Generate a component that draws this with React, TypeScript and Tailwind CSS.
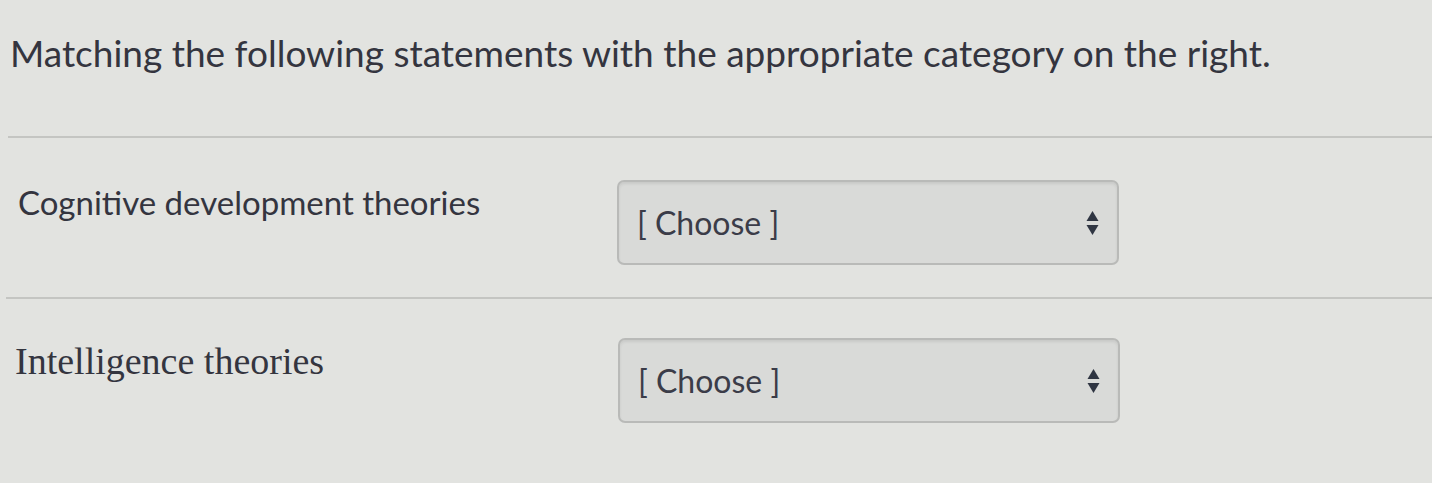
import React from 'react';

const Arrows = () => (
  <svg width="13" height="26" viewBox="0 0 13 26" className="shrink-0">
    <path d="M6.5 1 L12.5 11 L0.5 11 Z" fill="#2f3542" />
    <path d="M6.5 25 L12.5 15 L0.5 15 Z" fill="#2f3542" />
  </svg>
);

const Select = () => (
  <div className="flex items-center justify-between w-[502px] h-[85px] rounded-[7px] border-2 border-[#b9bab8] bg-[#d9dad8] pl-[18px] pr-[18px] shadow-[inset_0_2px_3px_rgba(0,0,0,0.08)]">
    <span className="text-[32px] text-[#3b3c48] font-['Lato','Open_Sans',sans-serif]">[ Choose ]</span>
    <Arrows />
  </div>
);

export default function App() {
  return (
    <div className="w-[1432px] h-[483px] overflow-hidden bg-[#e2e3e0] text-[#34353f]">
      <h1 className="pl-[10px] pt-[25px] h-[136px] text-[37px] leading-[56px] font-['Lato','Open_Sans',sans-serif]">
        Matching the following statements with the appropriate category on the right.
      </h1>
      <div className="ml-[8px] h-[2px] bg-[#c4c5c2]" />
      <div className="flex pt-[42px] h-[159px]">
        <div className="w-[617px] pl-[18px] text-[33px] leading-[44px] font-['Lato','Open_Sans',sans-serif]">
          Cognitive development theories
        </div>
        <Select />
      </div>
      <div className="ml-[6px] h-[2px] bg-[#c4c5c2]" />
      <div className="flex pt-[39px]">
        <div className="w-[618px] pl-[15px] pt-[1px] text-[38px] leading-[44px] font-['Liberation_Serif','Times_New_Roman',serif]">
          Intelligence theories
        </div>
        <Select />
      </div>
    </div>
  );
}
